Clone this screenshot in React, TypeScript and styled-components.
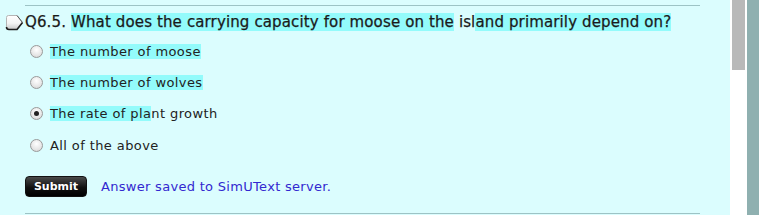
import React from "react";
import styled, { createGlobalStyle } from "styled-components";

const Global = createGlobalStyle`
  html, body { margin: 0; padding: 0; background: #ffffff; }
  body { font-family: "DejaVu Sans", Verdana, sans-serif; }
`;

const Page = styled.div`
  display: flex;
  width: 759px;
  height: 215px;
  overflow: hidden;
`;

const Main = styled.div`
  width: 730px;
  height: 215px;
  background: #dbfdfe;
  padding: 5px 0 0 5px;
  box-sizing: border-box;
  display: flex;
  flex-direction: column;
`;

const Rule = styled.div`
  margin-left: 20px;
  width: 675px;
  height: 1px;
  background: #9dc3c5;
`;

const QuestionRow = styled.div`
  display: flex;
  align-items: center;
  margin-top: 6px;
  height: 20px;
`;

const Pointer = styled.svg`
  width: 19px;
  height: 17px;
  flex: none;
  margin-right: 1px;
`;

const QuestionText = styled.div`
  font-size: 15px;
  letter-spacing: 0.13px;
  color: #1a1a1a;
  font-weight: normal;
  -webkit-text-stroke: 0.25px #1a1a1a;
  white-space: nowrap;
`;

const Mark = styled.span`
  background: #93fbfb;
`;

const Options = styled.div`
  display: flex;
  flex-direction: column;
  margin-left: 25px;
  margin-top: 10px;
  gap: 13.4px;
`;

const Option = styled.label`
  display: flex;
  align-items: center;
  height: 18px;
  font-size: 13px;
  letter-spacing: 0.4px;
  color: #222;
  white-space: nowrap;
`;

const Radio = styled.span<{ $checked?: boolean }>`
  width: 11px;
  height: 11px;
  border-radius: 50%;
  border: 1px solid #9a9a9a;
  background: radial-gradient(circle at 50% 35%, #ffffff 0%, #e6e6e6 60%, #cfcfcf 100%);
  margin-right: 7px;
  display: flex;
  align-items: center;
  justify-content: center;
  flex: none;
  &::after {
    content: "";
    display: ${(p) => (p.$checked ? "block" : "none")};
    width: 5px;
    height: 5px;
    border-radius: 50%;
    background: #222;
  }
`;

const Footer = styled.div`
  display: flex;
  align-items: center;
  margin-left: 20px;
  margin-top: 22px;
  gap: 14px;
`;

const SubmitButton = styled.button`
  width: 62px;
  height: 21px;
  border-radius: 4px;
  border: 1px solid #111;
  background: linear-gradient(#4a4a4a, #111 55%, #000);
  color: #fff;
  font-family: "DejaVu Sans", Verdana, sans-serif;
  font-weight: bold;
  font-size: 11px;
  padding: 0;
`;

const Status = styled.span`
  font-size: 13px;
  letter-spacing: 0.3px;
  color: #3328d0;
`;

const BottomRule = styled(Rule)`
  margin-top: auto;
  margin-bottom: 1px;
`;

const Gutter = styled.div`
  width: 17px;
  background: #ffffff;
  display: flex;
  justify-content: center;
`;

const Thumb = styled.div`
  width: 13px;
  height: 70px;
  background: #b9b9b9;
`;

const Edge = styled.div`
  width: 12px;
  background: #8fb0b0;
`;

const opts: { parts: [string, boolean][]; checked?: boolean }[] = [
  { parts: [["The number of moose", true]] },
  { parts: [["The number of wolves", true]] },
  { parts: [["The rate of pla", true], ["nt growth", false]], checked: true },
  { parts: [["All of the above", false]] },
];

export default function App() {
  return (
    <>
      <Global />
      <Page>
        <Main>
          <Rule />
          <QuestionRow>
            <Pointer viewBox="0 0 19 17">
              <defs>
                <linearGradient id="pg" x1="0" y1="0" x2="0" y2="1">
                  <stop offset="0" stopColor="#ffffff" />
                  <stop offset="0.55" stopColor="#f4f4f4" />
                  <stop offset="1" stopColor="#c8c8c8" />
                </linearGradient>
              </defs>
              <path d="M3.5 1.5 H12 L17.5 8.5 L12 15.5 H3.5 Q1.5 15.5 1.5 13.5 V3.5 Q1.5 1.5 3.5 1.5 Z" fill="url(#pg)" stroke="#b5b5b5" strokeWidth="1" />
              <path d="M1.5 13 Q1.5 15.5 4 15.5 H12 L17.5 8.5" fill="none" stroke="#1e1e1e" strokeWidth="1.6" strokeLinejoin="round" />
              <path d="M12 1.5 L17.5 8.5" fill="none" stroke="#555" strokeWidth="1" />
            </Pointer>
            <QuestionText>
              Q6.5. <Mark>What does the carrying capacity for moose on the</Mark> isl
              <Mark>and primarily depend on?</Mark>
            </QuestionText>
          </QuestionRow>
          <Options>
            {opts.map((o, i) => (
              <Option key={i}>
                <Radio $checked={o.checked} />
                <span>
                  {o.parts.map(([t, m], j) => (m ? <Mark key={j}>{t}</Mark> : <span key={j}>{t}</span>))}
                </span>
              </Option>
            ))}
          </Options>
          <Footer>
            <SubmitButton>Submit</SubmitButton>
            <Status>Answer saved to SimUText server.</Status>
          </Footer>
          <BottomRule />
        </Main>
        <Gutter>
          <Thumb />
        </Gutter>
        <Edge />
      </Page>
    </>
  );
}
